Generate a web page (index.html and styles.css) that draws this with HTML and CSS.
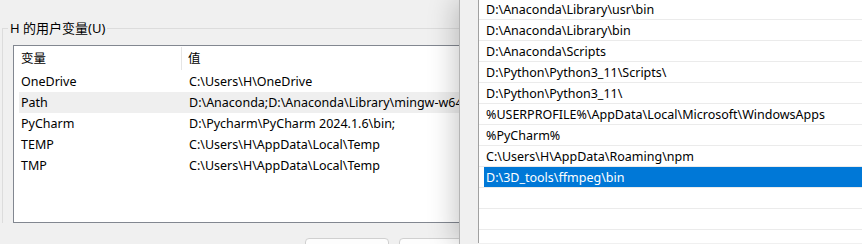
FILE: index.html
```html
<!DOCTYPE html>
<html lang="zh-CN">
<head>
	<meta charset="UTF-8">
	<title>环境变量</title>
	<link rel="stylesheet" href="styles.css">
</head>
<body>

	<div id="env">
		<div class="env-inner">
			<fieldset class="group">
				<legend>H 的用户变量(U)</legend>
				<div class="varlist">
					<div class="varhead">
						<div class="col-name">变量</div>
						<div class="col-value">值</div>
					</div>
					<div class="varrow"><span>OneDrive</span><span>C:\Users\H\OneDrive</span></div>
					<div class="varrow hover"><span>Path</span><span>D:\Anaconda;D:\Anaconda\Library\mingw-w64\bin</span></div>
					<div class="varrow"><span>PyCharm</span><span>D:\Pycharm\PyCharm 2024.1.6\bin;</span></div>
					<div class="varrow"><span>TEMP</span><span>C:\Users\H\AppData\Local\Temp</span></div>
					<div class="varrow"><span>TMP</span><span>C:\Users\H\AppData\Local\Temp</span></div>
				</div>
			</fieldset>
			<div class="buttons">
				<button>新建(N)...</button>
				<button>编辑(E)...</button>
				<button>删除(D)</button>
			</div>
		</div>
	</div>

	<div id="edit">
		<div class="pathlist">
			<div class="pathrow"><span>D:\Anaconda\Library\usr\bin</span></div>
			<div class="pathrow"><span>D:\Anaconda\Library\bin</span></div>
			<div class="pathrow"><span>D:\Anaconda\Scripts</span></div>
			<div class="pathrow"><span>D:\Python\Python3_11\Scripts\</span></div>
			<div class="pathrow"><span>D:\Python\Python3_11\</span></div>
			<div class="pathrow"><span>%USERPROFILE%\AppData\Local\Microsoft\WindowsApps</span></div>
			<div class="pathrow"><span>%PyCharm%</span></div>
			<div class="pathrow"><span>C:\Users\H\AppData\Roaming\npm</span></div>
			<div class="pathrow selected"><span>D:\3D_tools\ffmpeg\bin</span></div>
			<div class="pathrow"><span></span></div>
			<div class="pathrow"><span></span></div>
			<div class="pathrow"><span></span></div>
		</div>
	</div>

</body>
</html>
```

FILE: styles.css
```css
body {
	background: #f0f0f0;
	color: #000;
	display: flex;
	font-family: "Noto Sans", "Noto Sans CJK SC", sans-serif;
	font-size: 12.5px;
	height: 244px;
	margin: 0;
	overflow: hidden;
}

/* left dialog, mostly hidden behind the edit dialog */
#env {
	flex: 0 0 459px;
	overflow: hidden;
}
.env-inner {
	padding-left: 2px;
	width: 600px;
}
.group {
	border: 1px solid #dcdcdc;
	border-bottom: 0;
	border-right: 0;
	margin: 20px 0 0;
	padding: 9px 0 0 5px;
}
.group legend {
	font-size: 13px;
	line-height: 16px;
	padding: 0 2px;
}
.varlist {
	background: #fff;
	border: 1px solid #828790;
	height: 176px;
	margin-left: 5px;
	overflow: hidden;
}
.varhead {
	display: flex;
	height: 25px;
	line-height: 25px;
}
.varhead .col-name {
	border-right: 1px solid #e5e5e5;
	box-sizing: border-box;
	height: 23px;
	margin-top: 1px;
	line-height: 24px;
	padding-left: 7px;
	width: 168px;
}
.varhead .col-value {
	line-height: 26px;
	padding-left: 6px;
}
.varrow {
	display: grid;
	grid-template-columns: 168px 1fr;
	height: 21px;
	line-height: 22px;
	margin-left: 5px;
	padding-left: 2px;
	white-space: nowrap;
}
.varrow.hover {
	background: #efefef;
}
.buttons {
	display: flex;
	gap: 10px;
	padding: 15px 0 0 303px;
}
.buttons button {
	background: #fdfdfd;
	border: 1px solid #d0d0d0;
	border-radius: 4px;
	font: inherit;
	height: 24px;
	width: 84px;
}

/* edit dialog in front */
#edit {
	background: #f0f0f0;
	border-left: 1px solid #b4b4b4;
	box-shadow: -4px 0 26px rgba(0,0,0,.22);
	flex: 1;
	padding-left: 18px;
	position: relative;
	z-index: 1;
}
.pathlist {
	background: #fff;
	border-left: 1px solid #a0a0a0;
	height: 100%;
	margin-top: -1px;
}
.pathrow {
	border-bottom: 1px solid #ebebeb;
	height: 20px;
	padding-left: 5px;
	white-space: nowrap;
}
.pathrow span {
	display: block;
	height: 19px;
	line-height: 19px;
	padding: 1px 0 0 2px;
}
.pathrow.selected span {
	background: #0078d7;
	color: #fff;
}
```
